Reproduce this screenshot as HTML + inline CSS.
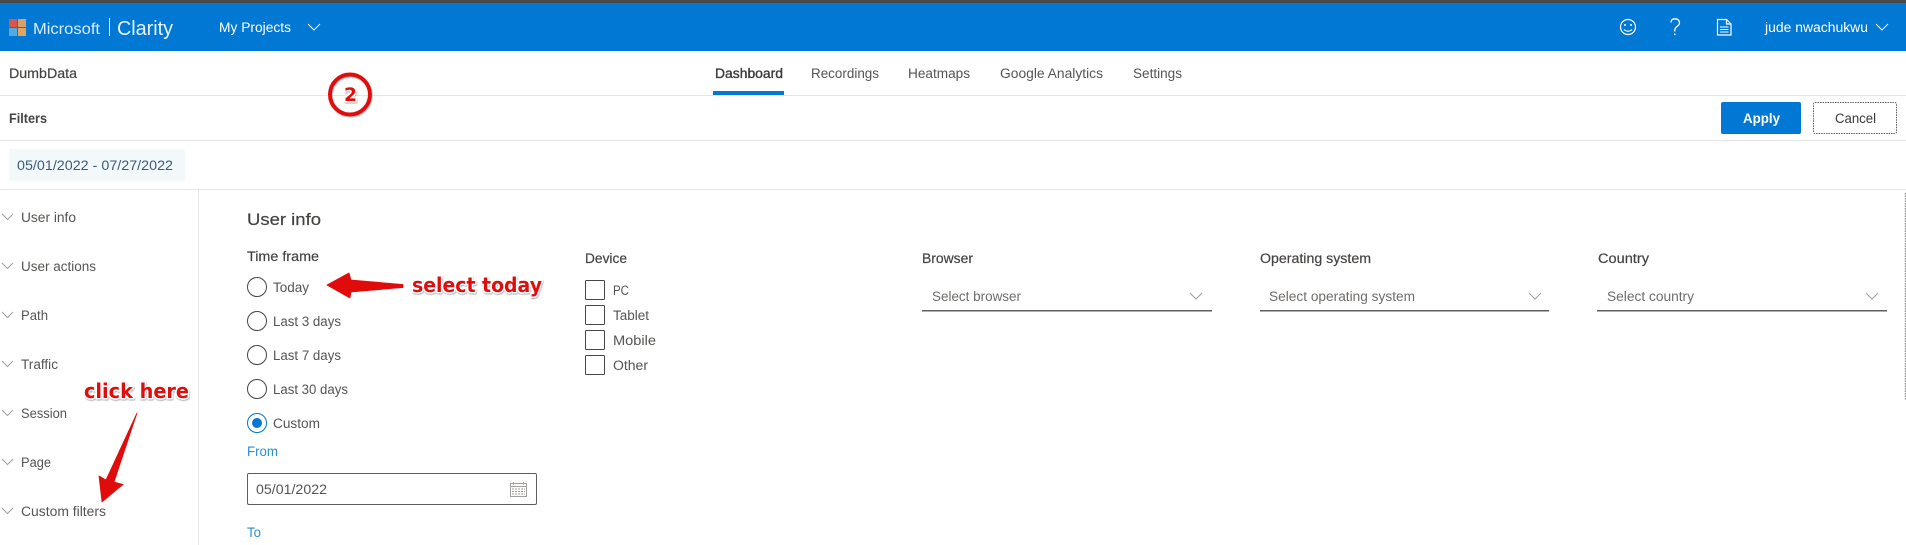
<!DOCTYPE html>
<html lang="en">
<head>
<meta charset="utf-8">
<title>Microsoft Clarity</title>
<style>
html,body{margin:0;padding:0;background:#fff;width:1906px;height:545px;overflow:hidden}
svg{display:block;font-family:"Liberation Sans",sans-serif}
text{font-size:13.5px;fill:#555452}
.w{fill:#fff}
.s{stroke:#484644;stroke-width:.2;fill:#444240}
.b{fill:#2b8fd0}
.g{fill:#6e6c6a}
.a{font-family:"DejaVu Sans",sans-serif;font-weight:bold;font-size:20px;fill:#e00b0b;stroke:#fff;stroke-width:3px;paint-order:stroke;stroke-linejoin:round}
.c{fill:none;stroke:#a19f9d;stroke-width:1}
</style>
</head>
<body>
<svg width="1906" height="545" viewBox="0 0 1906 545" xmlns="http://www.w3.org/2000/svg">
<defs>
<filter id="sh" x="-10%" y="-20%" width="120%" height="150%"><feDropShadow dx="0.5" dy="1" stdDeviation="0.6" flood-color="#888" flood-opacity=".7"/></filter>
</defs>

<!-- Top bar -->
<rect x="0" y="0" width="1906" height="3" fill="#4a4a4a"/>
<rect x="0" y="3" width="1906" height="48" fill="#0078d4"/>
<rect x="9" y="19" width="8" height="8" fill="#d9574a"/>
<rect x="18" y="19" width="8" height="8" fill="#d8a068"/>
<rect x="9" y="28" width="8" height="8" fill="#52abe2"/>
<rect x="18" y="28" width="8" height="8" fill="#e2a55f"/>
<text x="33" y="34" style="font-size:16px;fill:#dcecf9" textLength="67" lengthAdjust="spacingAndGlyphs">Microsoft</text>
<rect x="109" y="18" width="1" height="18" fill="#dcecf9"/>
<text x="117" y="35" style="font-size:20px;fill:#e8f3fb" textLength="56" lengthAdjust="spacingAndGlyphs">Clarity</text>
<text class="w" x="219" y="32" textLength="72" lengthAdjust="spacingAndGlyphs">My Projects</text>
<path d="M308 24l6 6 6-6" fill="none" stroke="#fff" stroke-width="1"/>

<circle cx="1628" cy="27" r="7.500" fill="none" stroke="#fff" stroke-width="1.200"/>
<circle cx="1625" cy="25" r="1" fill="#fff"/>
<circle cx="1631" cy="25" r="1" fill="#fff"/>
<path d="M1624 29.500q4 3.500 8 0" fill="none" stroke="#fff" stroke-width="1.100"/>
<path d="M1671 22.500q0-3.700 4-3.700t4.500 3.700q0 2.500-2.500 4t-2.200 5" fill="none" stroke="#fff" stroke-width="1.300"/>
<rect x="1674" y="33.500" width="1.500" height="1.700" fill="#fff"/>
<path d="M1717.500 19.500h9l4.500 4.500v11h-13.500zM1726.500 19.500v4.500h4.500" fill="none" stroke="#fff" stroke-width="1.200"/>
<path d="M1720 27h8.500M1720 29.500h8.500M1720 32h8.500" stroke="#fff" stroke-width="1.100"/>
<text class="w" x="1765" y="32" textLength="103" lengthAdjust="spacingAndGlyphs">jude nwachukwu</text>
<path d="M1876 24l6 6 6-6" fill="none" stroke="#fff" stroke-width="1"/>

<!-- Nav row -->
<text class="s" x="9" y="78" textLength="68" lengthAdjust="spacingAndGlyphs">DumbData</text>
<text x="715" y="78" style="fill:#3b3a39;stroke:#3b3a39;stroke-width:.35" textLength="68" lengthAdjust="spacingAndGlyphs">Dashboard</text>
<rect x="713" y="91" width="71" height="4" fill="#0078d4"/>
<text x="811" y="78" textLength="68" lengthAdjust="spacingAndGlyphs">Recordings</text>
<text x="908" y="78" textLength="62" lengthAdjust="spacingAndGlyphs">Heatmaps</text>
<text x="1000" y="78" textLength="103" lengthAdjust="spacingAndGlyphs">Google Analytics</text>
<text x="1133" y="78" textLength="49" lengthAdjust="spacingAndGlyphs">Settings</text>
<rect x="0" y="95" width="1906" height="1" fill="#e3e5e8"/>

<!-- Filters row -->
<text x="9" y="123" style="fill:#444;font-weight:bold" textLength="38" lengthAdjust="spacingAndGlyphs">Filters</text>
<rect x="1721" y="102" width="80" height="32" rx="2" fill="#0078d4"/>
<text class="w" x="1743" y="123" style="font-weight:bold" textLength="37" lengthAdjust="spacingAndGlyphs">Apply</text>
<rect x="1813.500" y="102.500" width="83" height="31" rx="1.500" fill="#fff" stroke="#605e5c" stroke-dasharray="1.500 1"/>
<text x="1835" y="123" style="fill:#3b3a39" textLength="41" lengthAdjust="spacingAndGlyphs">Cancel</text>
<rect x="0" y="140" width="1906" height="1" fill="#e6e6e6"/>

<!-- Date chip -->
<rect x="9" y="149" width="176" height="32" fill="#f3f8fb"/>
<text x="17" y="170" style="fill:#3a5a7c" textLength="156" lengthAdjust="spacingAndGlyphs">05/01/2022 - 07/27/2022</text>
<rect x="0" y="189" width="1906" height="1" fill="#e6e6e6"/>

<!-- Sidebar -->
<rect x="198" y="190" width="1" height="355" fill="#e6e6e6"/>
<g fill="none" stroke="#a19f9d" stroke-width="1">
<path d="M2 214l5.500 5.500 5.500-5.500"/>
<path d="M2 263l5.500 5.500 5.500-5.500"/>
<path d="M2 312l5.500 5.500 5.500-5.500"/>
<path d="M2 361l5.500 5.500 5.500-5.500"/>
<path d="M2 410l5.500 5.500 5.500-5.500"/>
<path d="M2 459l5.500 5.500 5.500-5.500"/>
<path d="M2 508l5.500 5.500 5.500-5.500"/>
</g>
<text x="21" y="222" textLength="55" lengthAdjust="spacingAndGlyphs">User info</text>
<text x="21" y="271" textLength="75" lengthAdjust="spacingAndGlyphs">User actions</text>
<text x="21" y="320" textLength="27" lengthAdjust="spacingAndGlyphs">Path</text>
<text x="21" y="369" textLength="37" lengthAdjust="spacingAndGlyphs">Traffic</text>
<text x="21" y="418" textLength="46" lengthAdjust="spacingAndGlyphs">Session</text>
<text x="21" y="467" textLength="30" lengthAdjust="spacingAndGlyphs">Page</text>
<text x="21" y="516" textLength="85" lengthAdjust="spacingAndGlyphs">Custom filters</text>

<!-- User info -->
<text class="s" x="247" y="225" style="font-size:17px" textLength="74" lengthAdjust="spacingAndGlyphs">User info</text>
<text class="s" x="247" y="261" textLength="72" lengthAdjust="spacingAndGlyphs">Time frame</text>

<g fill="#fff" stroke="#484644" stroke-width="1">
<circle cx="257" cy="287" r="9.500"/>
<circle cx="257" cy="321" r="9.500"/>
<circle cx="257" cy="355" r="9.500"/>
<circle cx="257" cy="389" r="9.500"/>
</g>
<circle cx="257" cy="423" r="9.500" fill="#fff" stroke="#0078d4"/>
<circle cx="257" cy="423" r="5" fill="#0078d4"/>
<text x="273" y="292" textLength="36" lengthAdjust="spacingAndGlyphs">Today</text>
<text x="273" y="326" textLength="68" lengthAdjust="spacingAndGlyphs">Last 3 days</text>
<text x="273" y="360" textLength="68" lengthAdjust="spacingAndGlyphs">Last 7 days</text>
<text x="273" y="394" textLength="75" lengthAdjust="spacingAndGlyphs">Last 30 days</text>
<text x="273" y="428" textLength="47" lengthAdjust="spacingAndGlyphs">Custom</text>
<text class="b" x="247" y="456" textLength="31" lengthAdjust="spacingAndGlyphs">From</text>
<rect x="247.500" y="473.500" width="289" height="31" rx="1.500" fill="#fff" stroke="#605e5c"/>
<text x="256" y="494" textLength="71" lengthAdjust="spacingAndGlyphs">05/01/2022</text>
<g fill="none" stroke="#a19f9d" stroke-width="1">
<rect x="510.500" y="483.500" width="16" height="13"/>
<path d="M510.500 486.500h16M513.500 482v2.500M523.500 482v2.500"/>
<path d="M512 489h13M512 491.500h13M512 494h13" stroke-dasharray="2 1"/>
</g>
<text class="b" x="247" y="537" textLength="14" lengthAdjust="spacingAndGlyphs">To</text>

<!-- Device -->
<text class="s" x="585" y="263" textLength="42" lengthAdjust="spacingAndGlyphs">Device</text>
<g fill="#fff" stroke="#484644">
<rect x="585.500" y="280.500" width="19" height="19" rx="1"/>
<rect x="585.500" y="305.500" width="19" height="19" rx="1"/>
<rect x="585.500" y="330.500" width="19" height="19" rx="1"/>
<rect x="585.500" y="355.500" width="19" height="19" rx="1"/>
</g>
<text x="613" y="295" textLength="16" lengthAdjust="spacingAndGlyphs">PC</text>
<text x="613" y="320" textLength="36" lengthAdjust="spacingAndGlyphs">Tablet</text>
<text x="613" y="345" textLength="43" lengthAdjust="spacingAndGlyphs">Mobile</text>
<text x="613" y="370" textLength="35" lengthAdjust="spacingAndGlyphs">Other</text>

<!-- Dropdowns -->
<text class="s" x="922" y="263" textLength="51" lengthAdjust="spacingAndGlyphs">Browser</text>
<text class="g" x="932" y="301" textLength="89" lengthAdjust="spacingAndGlyphs">Select browser</text>
<path class="c" d="M1190 293l6 6 6-6"/>
<rect x="922" y="310" width="290" height="1.500" fill="#605e5c"/>

<text class="s" x="1260" y="263" textLength="111" lengthAdjust="spacingAndGlyphs">Operating system</text>
<text class="g" x="1269" y="301" textLength="146" lengthAdjust="spacingAndGlyphs">Select operating system</text>
<path class="c" d="M1529 293l6 6 6-6"/>
<rect x="1260" y="310" width="289" height="1.500" fill="#605e5c"/>

<text class="s" x="1598" y="263" textLength="51" lengthAdjust="spacingAndGlyphs">Country</text>
<text class="g" x="1607" y="301" textLength="87" lengthAdjust="spacingAndGlyphs">Select country</text>
<path class="c" d="M1866 293l6 6 6-6"/>
<rect x="1597" y="310" width="290" height="1.500" fill="#605e5c"/>

<!-- Scrollbar hint -->
<path d="M1905.500 193V400" stroke="#8f8f8f" stroke-width="1.500" stroke-dasharray="1.500 1"/>

<!-- Annotations -->
<circle cx="350" cy="94.500" r="20" fill="none" stroke="#e00b0b" stroke-width="4" filter="url(#sh)"/>
<text class="a" x="344" y="101" style="font-size:19px" filter="url(#sh)" textLength="13" lengthAdjust="spacingAndGlyphs">2</text>

<path d="M327 285L349 273L351 280L403 284.500V287.500L351 292L350 298Z" fill="#e00b0b" stroke="#e00b0b" stroke-width=".8" stroke-linejoin="round"/>
<text class="a" x="412" y="292" filter="url(#sh)" textLength="130" lengthAdjust="spacingAndGlyphs">select today</text>

<text class="a" x="84" y="398" filter="url(#sh)" textLength="105" lengthAdjust="spacingAndGlyphs">click here</text>
<path d="M137 413L114 482L123 484.500L102 502L99 476L106 480Z" fill="#e00b0b" stroke="#e00b0b" stroke-width=".8" stroke-linejoin="round"/>
</svg>
</body>
</html>
